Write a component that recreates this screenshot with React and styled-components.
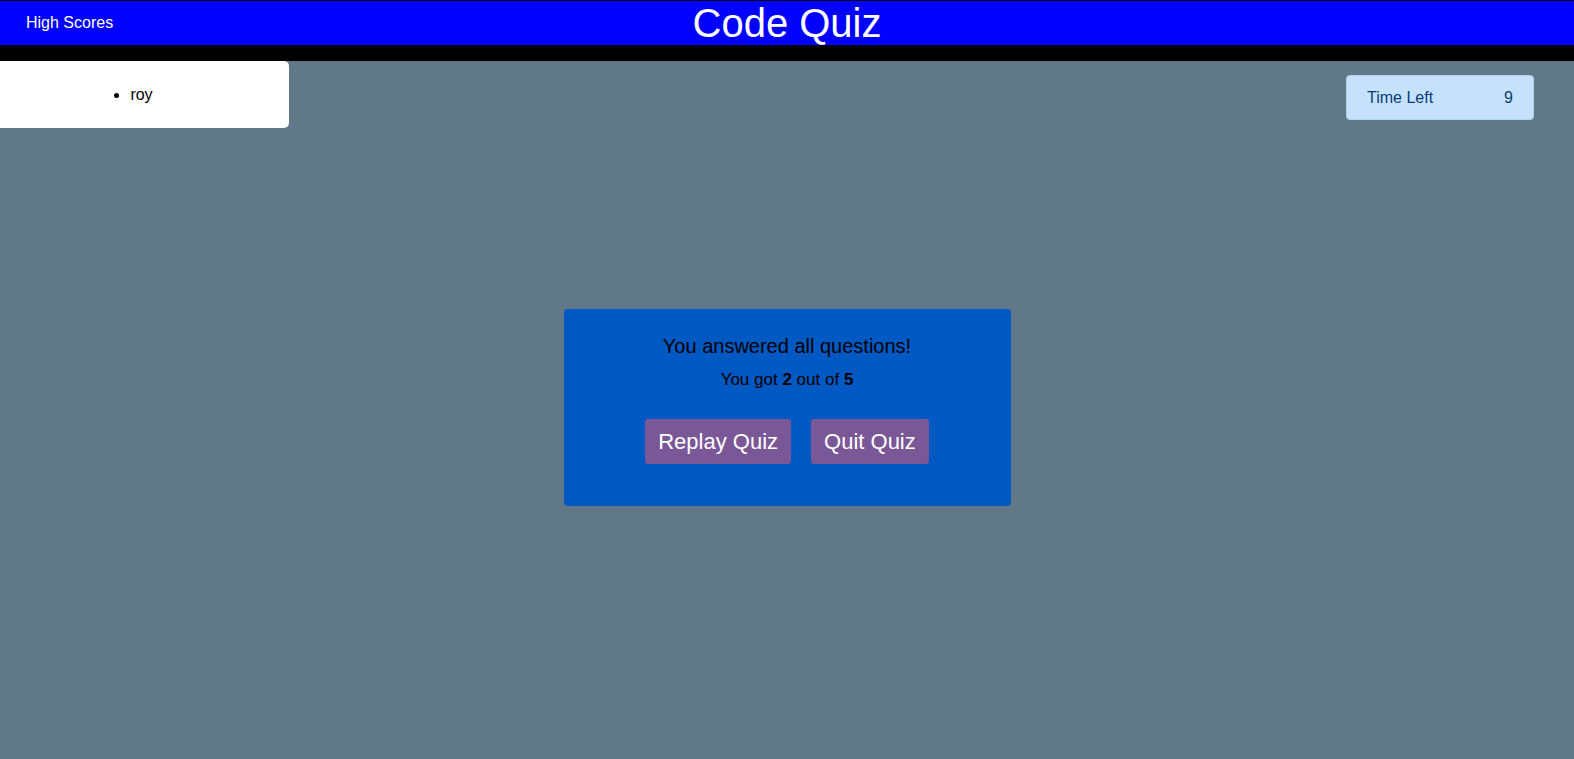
import React from 'react';
import styled, {createGlobalStyle} from 'styled-components';

const GlobalStyle = createGlobalStyle`
    html, body {
        margin: 0;
        padding: 0;
        overflow: hidden;
        font-family: "Liberation Sans", Arial, sans-serif;
        background: #607888;
    }
`;

const Header = styled.header`
    position: relative;
    display: flex;
    align-items: center;
    justify-content: center;
    height: 44px;
    background: #0000ff;
    border-top: 1px solid #000;
    border-bottom: 16px solid #000;
    color: #fff;
`;

const HighScoresLink = styled.a`
    position: absolute;
    left: 26px;
    top: 13px;
    font-size: 16px;
    color: #fff;
    text-decoration: none;
    cursor: pointer;
`;

const Title = styled.h1`
    margin: 0;
    font-size: 40px;
    font-weight: normal;
    line-height: 44px;
`;

const Main = styled.main`
    background: #607888;
`;

const TopRow = styled.div`
    display: flex;
    justify-content: space-between;
    align-items: flex-start;
`;

const ScoreCard = styled.div`
    width: 289px;
    height: 67px;
    background: #fff;
    border-radius: 0 5px 5px 0;
    display: flex;
    align-items: center;
    justify-content: center;
`;

const ScoreList = styled.ul`
    margin: 0;
    padding: 0 6px 0 0;
    font-size: 16px;
    color: #000;
`;

const Timer = styled.div`
    display: flex;
    justify-content: space-between;
    align-items: center;
    box-sizing: border-box;
    width: 188px;
    height: 45px;
    margin: 14px 40px 0 0;
    padding: 0 20px 0 20px;
    background: #c6e1fc;
    border: 1px solid #b2d2f3;
    border-radius: 4px;
    color: #063d75;
    font-size: 16px;
`;

const Modal = styled.section`
    box-sizing: border-box;
    width: 447px;
    height: 197px;
    margin: 181px auto 0;
    padding-top: 25px;
    background: #0058c3;
    border-radius: 4px;
    text-align: center;
    color: #000;
`;

const Heading = styled.h2`
    margin: 0;
    font-size: 20px;
    font-weight: normal;
    line-height: 24px;
`;

const Result = styled.p`
    margin: 12px 0 0;
    font-size: 17px;
    line-height: 20px;
`;

const Actions = styled.div`
    display: flex;
    justify-content: center;
    gap: 20px;
    margin-top: 29px;
`;

const QuizButton = styled.button`
    height: 45px;
    padding: 0 13px;
    border: none;
    border-radius: 3px;
    background: #7a5897;
    color: #fff;
    font-family: "Liberation Sans", Arial, sans-serif;
    font-size: 22px;
    cursor: pointer;
`;

export default function App() {
    return (
        <>
            <GlobalStyle/>
            <Header>
                <HighScoresLink>High Scores</HighScoresLink>
                <Title>Code Quiz</Title>
            </Header>
            <Main>
                <TopRow>
                    <ScoreCard>
                        <ScoreList>
                            <li>roy</li>
                        </ScoreList>
                    </ScoreCard>
                    <Timer>
                        <span>Time Left</span>
                        <span>9</span>
                    </Timer>
                </TopRow>
                <Modal>
                    <Heading>You answered all questions!</Heading>
                    <Result>You got <strong>2</strong> out of <strong>5</strong></Result>
                    <Actions>
                        <QuizButton>Replay Quiz</QuizButton>
                        <QuizButton>Quit Quiz</QuizButton>
                    </Actions>
                </Modal>
            </Main>
        </>
    );
}
